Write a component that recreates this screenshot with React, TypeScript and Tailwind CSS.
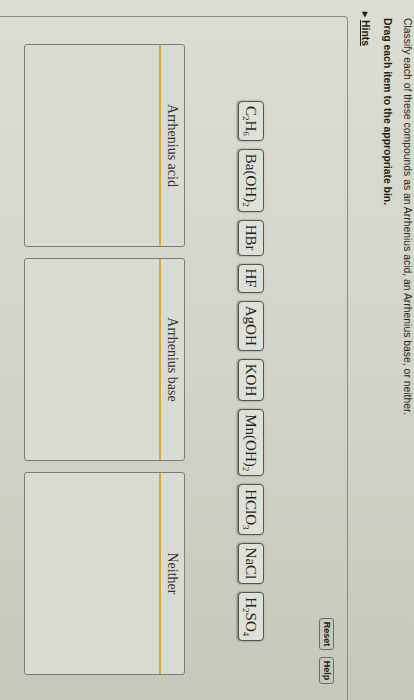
import React from 'react'

type Part = { t: string; sub?: boolean }

const items: Part[][] = [
  [{ t: 'C' }, { t: '2', sub: true }, { t: 'H' }, { t: '6', sub: true }],
  [{ t: 'Ba(OH)' }, { t: '2', sub: true }],
  [{ t: 'HBr' }],
  [{ t: 'HF' }],
  [{ t: 'AgOH' }],
  [{ t: 'KOH' }],
  [{ t: 'Mn(OH)' }, { t: '2', sub: true }],
  [{ t: 'HClO' }, { t: '3', sub: true }],
  [{ t: 'NaCl' }],
  [{ t: 'H' }, { t: '2', sub: true }, { t: 'SO' }, { t: '4', sub: true }],
]

const bins = ['Arrhenius acid', 'Arrhenius base', 'Neither']

function Chip({ parts }: { parts: Part[] }) {
  return (
    <div className="flex h-[26px] items-center rounded-[4px] border-[1.5px] border-[#55574f] bg-[#dfe1d8] px-[4px] font-['Liberation_Serif'] text-[15px] leading-none text-[#1f1f1f] shadow-[0_1px_2px_rgba(0,0,0,0.45)]">
      {parts.map((p, i) =>
        p.sub ? (
          <span key={i} className="relative top-[5px] text-[9px]">
            {p.t}
          </span>
        ) : (
          <span key={i}>{p.t}</span>
        )
      )}
    </div>
  )
}

function Bin({ label }: { label: string }) {
  return (
    <div className="h-[161px] w-[203px] rounded-[3px] border border-[#7b7d75] bg-[#d9dcd2]">
      <div className="flex h-[25px] items-center justify-center border-b-2 border-[#d9ab35] font-['Liberation_Serif'] text-[14px] text-[#333]">
        {label}
      </div>
    </div>
  )
}

export default function App() {
  return (
    <div className="relative h-[700px] w-[414px] overflow-hidden bg-[#d3d5ca]">
      {/* the photo is turned a quarter turn, so the page is laid out flat and then rotated */}
      <div className="h-[414px] w-[700px] origin-top-left translate-x-[414px] rotate-90 bg-gradient-to-r from-[#dcded4] via-[#d3d5ca] to-[#c6c8bb]">
        <div className="pl-[18px] font-['Liberation_Sans'] text-[10.4px] leading-[14px] text-[#1e1e1e]">
          <p>
            Classify each of these compounds as an Arrhenius acid, an Arrhenius base, or neither.
          </p>
          <p className="mt-[6px] font-bold">Drag each item to the appropriate bin.</p>
          <div className="-ml-[6px] mt-[8px] flex items-center gap-[3px] font-bold">
            <span className="text-[7px]">▶</span>
            <span className="underline">Hints</span>
          </div>
        </div>

        <div className="ml-[16px] mt-[10px] h-[360px] w-[720px] rounded-tl-[4px] border-l border-t border-[#8b8d85]">
          <div className="flex justify-end gap-[7px] pr-[52px] pt-[13px] font-['Liberation_Sans'] text-[9px] font-bold text-[#222]">
            <div className="flex h-[15px] w-[32px] items-center justify-center rounded-[3px] border border-[#6b6d66]">
              Reset
            </div>
            <div className="flex h-[15px] w-[27px] items-center justify-center rounded-[3px] border border-[#6b6d66]">
              Help
            </div>
          </div>

          <div className="mt-[55px] flex gap-[8px] pl-[84px]">
            {items.map((parts, i) => (
              <Chip key={i} parts={parts} />
            ))}
          </div>

          <div className="mt-[53px] flex gap-[11px] pl-[27px]">
            {bins.map((b) => (
              <Bin key={b} label={b} />
            ))}
          </div>
        </div>
      </div>
    </div>
  )
}
